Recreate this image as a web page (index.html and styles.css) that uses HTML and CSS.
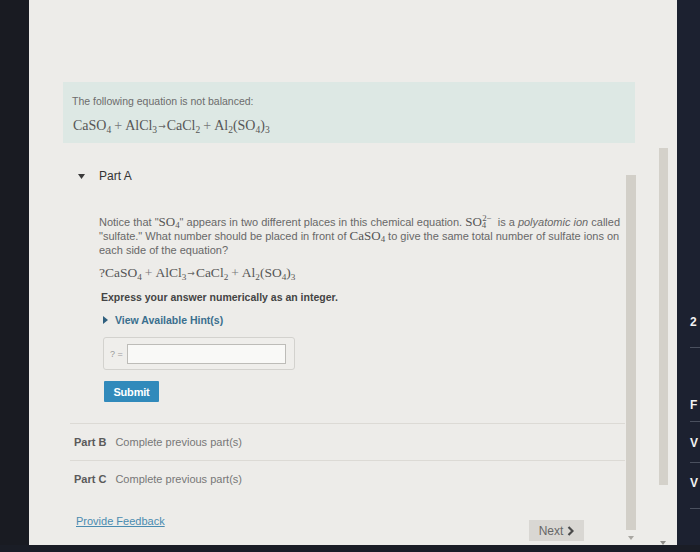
FILE: index.html
```html
<!DOCTYPE html>
<html>
<head>
<meta charset="utf-8">
<link rel="stylesheet" href="styles.css">
</head>
<body>
<div class="screen">
  <div class="bezel-left"></div>
  <div class="page">
    <div class="main">
      <div class="problem">
        <p class="intro">The following equation is not balanced:</p>
        <p class="eq">CaSO<sub>4</sub><span class="op">+</span>AlCl<sub>3</sub><span class="arrow">→</span>CaCl<sub>2</sub><span class="op">+</span>Al<sub>2</sub>(SO<sub>4</sub>)<sub>3</sub></p>
      </div>
      <div class="parts">
        <div class="parts-body">
          <div class="part-head">
            <svg class="caret" width="7" height="5" viewBox="0 0 7 5"><polygon points="0,0 7,0 3.5,5" fill="#3a3a3a"/></svg>
            <span>Part A</span>
          </div>
          <div class="part-body">
            <p class="question">Notice that "<span class="m">SO<sub>4</sub></span>" appears in two different places in this chemical equation. <span class="m">SO<sub>4</sub><sup class="charge">2−</sup></span> is a <em>polyatomic ion</em> called "sulfate." What number should be placed in front of <span class="m">CaSO<sub>4</sub></span> to give the same total number of sulfate ions on each side of the equation?</p>
            <p class="eq eq-q">?CaSO<sub>4</sub><span class="op">+</span>AlCl<sub>3</sub><span class="arrow">→</span>CaCl<sub>2</sub><span class="op">+</span>Al<sub>2</sub>(SO<sub>4</sub>)<sub>3</sub></p>
            <p class="express">Express your answer numerically as an integer.</p>
            <div class="hint">
              <svg class="hint-caret" width="5" height="8" viewBox="0 0 5 8"><polygon points="0,0 5,4 0,8" fill="#2f5f7e"/></svg>
              <span>View Available Hint(s)</span>
            </div>
            <div class="answer">
              <span class="ans-label">? =</span>
              <span class="ans-input"></span>
            </div>
            <button class="submit">Submit</button>
          </div>
          <div class="part-row first"><b>Part B</b><span>Complete previous part(s)</span></div>
          <div class="part-row"><b>Part C</b><span>Complete previous part(s)</span></div>
          <div class="footer">
            <a class="feedback">Provide Feedback</a>
            <button class="next">Next <svg width="7" height="10" viewBox="0 0 7 10"><polyline points="1.5,1 5.5,5 1.5,9" fill="none" stroke="#4a4a4a" stroke-width="2.2"/></svg></button>
          </div>
        </div>
        <div class="inner-track">
          <div class="inner-thumb"></div>
          <svg class="track-arrow" width="6" height="4" viewBox="0 0 6 4"><polygon points="0,0 6,0 3,4" fill="#a9a7a2"/></svg>
        </div>
      </div>
    </div>
    <div class="outer-track">
      <div class="outer-thumb"></div>
      <svg class="outer-arrow" width="6" height="4" viewBox="0 0 6 4"><polygon points="0,0 6,0 3,4" fill="#8e8c88"/></svg>
    </div>
  </div>
  <div class="bezel-right">
    <div class="rt-item r2">2</div>
    <div class="rt-line l1"></div>
    <div class="rt-item r3">F</div>
    <div class="rt-line l2"></div>
    <div class="rt-item r4">V</div>
    <div class="rt-line l3"></div>
    <div class="rt-item r5">V</div>
    <div class="rt-line l4"></div>
  </div>
</div>
</body>
</html>
```

FILE: styles.css
```css
* { box-sizing: border-box; }

html, body {
  margin: 0;
  padding: 0;
}

body {
  width: 700px;
  height: 552px;
  overflow: hidden;
  background: #1a1d26;
  font-family: "Liberation Sans", Arial, sans-serif;
}

p { margin: 0; }

.screen {
  display: flex;
  height: 545px;
}

.bezel-left {
  width: 29px;
  flex: none;
  background: #191b22;
}

.page {
  width: 648px;
  flex: none;
  display: flex;
  background: #edece9;
}

.main {
  width: 607px;
  flex: none;
  padding-top: 82px;
  padding-left: 34px;
}

.problem {
  width: 572px;
  height: 61px;
  background: #dde8e4;
  padding: 12px 0 0 9px;
}

.intro {
  font-size: 10.5px;
  line-height: 14px;
  color: #6c6c6c;
}

.eq {
  font-family: "Liberation Serif", "Times New Roman", serif;
  font-size: 14px;
  line-height: 18px;
  color: #565656;
  margin-top: 9px;
  margin-left: 1px;
}

.eq sub, .m sub {
  font-size: 68%;
  line-height: 0;
  vertical-align: -0.28em;
}

.op {
  margin: 0 3px;
  color: #777;
}

.arrow {
  font-family: "DejaVu Sans", sans-serif;
  font-size: 9px;
  line-height: 0;
  vertical-align: 1px;
  margin: 0 1px;
  color: #666;
}

.parts {
  margin-top: 5px;
  display: flex;
}

.parts-body {
  width: 563px;
  flex: none;
}

.part-head {
  margin-top: 18px;
  height: 20px;
  display: flex;
  align-items: center;
  padding-left: 15px;
  font-size: 12px;
  color: #333;
}

.caret {
  margin-right: 14px;
}

.part-body {
  padding-left: 36px;
}

.question {
  margin-top: 29px;
  width: 530px;
  font-size: 11px;
  line-height: 14px;
  color: #686868;
}

.m {
  font-family: "Liberation Serif", "Times New Roman", serif;
  font-size: 13px;
  line-height: 0;
  color: #555;
}

.charge {
  font-size: 68%;
  line-height: 0;
  vertical-align: 0.55em;
  margin-left: -4px;
  margin-right: 3px;
}

.question em {
  font-style: italic;
}

.eq-q {
  margin-top: 7px;
  margin-left: 0;
  font-size: 13.5px;
}

.express {
  margin-top: 8px;
  padding-left: 2px;
  font-size: 10.5px;
  line-height: 14px;
  font-weight: bold;
  color: #444;
}

.hint {
  margin-top: 9px;
  height: 14px;
  display: flex;
  align-items: center;
  padding-left: 4px;
  font-size: 10.5px;
  font-weight: bold;
  color: #3a6f8e;
}

.hint-caret {
  margin-right: 7px;
}

.answer {
  margin-top: 10px;
  margin-left: 4px;
  width: 192px;
  height: 33px;
  border: 1px solid #d3d2ce;
  border-radius: 3px;
  background: #efeeeb;
  display: flex;
  align-items: center;
  padding-left: 6px;
}

.ans-label {
  width: 17px;
  font-size: 9px;
  color: #9a9a9a;
}

.ans-input {
  width: 159px;
  height: 20px;
  background: #f9f9f7;
  border: 1px solid #bdbcb8;
}

.submit {
  display: block;
  margin-top: 11px;
  margin-left: 5px;
  width: 55px;
  height: 21px;
  padding: 0;
  border: none;
  border-radius: 1px;
  background: #318abb;
  color: #fff;
  font-family: "Liberation Sans", Arial, sans-serif;
  font-size: 11px;
  font-weight: bold;
  letter-spacing: -0.2px;
}

.part-row {
  margin-left: 7px;
  margin-right: 1px;
  height: 37px;
  border-top: 1px solid #dcdad5;
  display: flex;
  align-items: center;
  padding-left: 4px;
  font-size: 11px;
  color: #777;
}

.part-row.first {
  margin-top: 21px;
}

.part-row b {
  color: #5a5a5a;
  margin-right: 9px;
}

.footer {
  display: flex;
  justify-content: space-between;
  align-items: flex-start;
  padding-left: 13px;
  padding-right: 42px;
}

.feedback {
  margin-top: 16px;
  font-size: 11px;
  line-height: 16px;
  color: #4a8bb0;
  text-decoration: underline;
}

.next {
  margin-top: 23px;
  width: 55px;
  height: 21px;
  padding: 0;
  border: none;
  background: #d9d7d3;
  color: #666;
  font-family: "Liberation Sans", Arial, sans-serif;
  font-size: 12px;
  display: flex;
  align-items: center;
  justify-content: center;
  gap: 4px;
}

.inner-track {
  width: 10px;
  flex: none;
  display: flex;
  flex-direction: column;
  align-items: center;
}

.inner-thumb {
  margin-top: 27px;
  width: 10px;
  height: 355px;
  background: #d2cfc8;
}

.track-arrow {
  margin-top: 6px;
}

.outer-track {
  width: 41px;
  flex: none;
  padding-left: 23px;
}

.outer-thumb {
  margin-top: 148px;
  width: 9px;
  height: 337px;
  background: #d4d1ca;
}

.outer-arrow {
  display: block;
  margin-top: 56px;
  margin-left: 1px;
}

.bezel-right {
  width: 23px;
  flex: none;
  background: #1c2130;
  overflow: hidden;
  padding-top: 314px;
  padding-left: 13px;
}

.rt-item {
  height: 16px;
  line-height: 16px;
  font-size: 12px;
  font-weight: bold;
  color: #f2f2f2;
  white-space: nowrap;
}

.rt-line {
  height: 1px;
  width: 20px;
  background: #4a505e;
}

.l1 { margin-top: 17px; }
.r3 { margin-top: 49px; }
.l2 { margin-top: 8px; }
.r4 { margin-top: 13px; }
.l3 { margin-top: 11px; }
.r5 { margin-top: 12px; }
.l4 { margin-top: 17px; }
```
